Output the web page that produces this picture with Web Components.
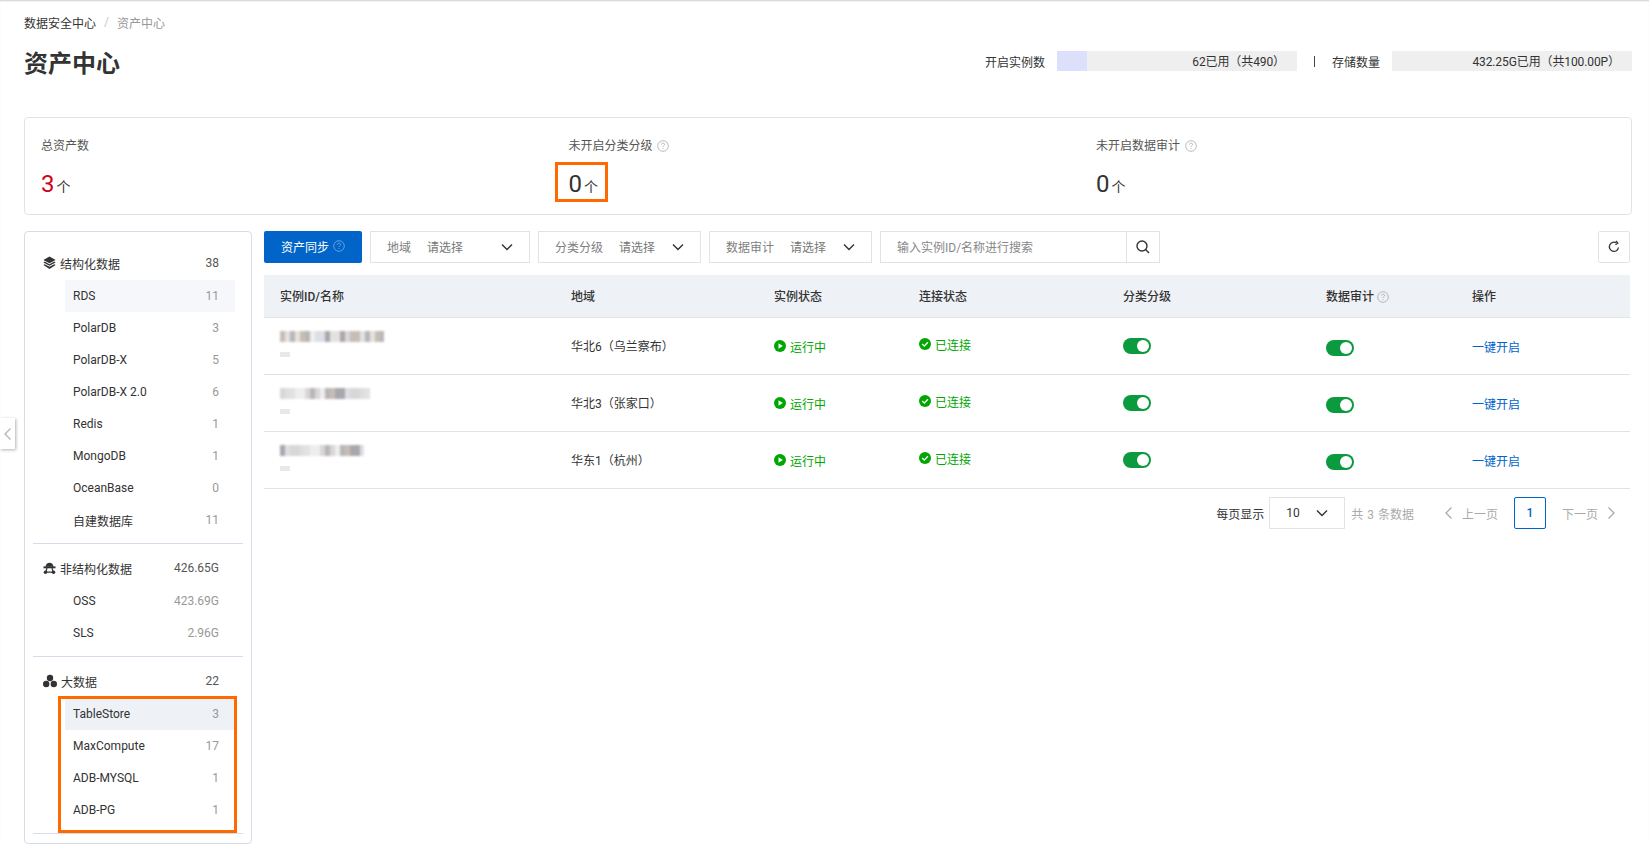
<!DOCTYPE html>
<html lang="zh-CN">
<head>
<meta charset="utf-8">
<title>资产中心</title>
<style>
  html, body {
    background: #ffffff;
    color: #333333;
    font-family: Roboto, 'Noto Sans CJK SC', sans-serif;
    font-size: 12px;
    margin: 0;
    padding: 0;
  }
</style>
</head>
<body>

<ds-app>
  <ds-breadcrumb root="数据安全中心" current="资产中心"></ds-breadcrumb>

  <ds-head title="资产中心">
    <ds-quota label="开启实例数" value="62已用（共490）" percent="12.5"></ds-quota>
    <ds-quota label="存储数量" value="432.25G已用（共100.00P）" percent="0" divided></ds-quota>
  </ds-head>

  <ds-stats>
    <ds-stat label="总资产数" value="3" danger></ds-stat>
    <ds-stat label="未开启分类分级" value="0" help marked></ds-stat>
    <ds-stat label="未开启数据审计" value="0" help></ds-stat>
  </ds-stats>

  <ds-main>
    <ds-sidebar slot="side">
      <ds-side-group label="结构化数据" count="38" icon="layers">
        <ds-side-item label="RDS" count="11" soft></ds-side-item>
        <ds-side-item label="PolarDB" count="3"></ds-side-item>
        <ds-side-item label="PolarDB-X" count="5"></ds-side-item>
        <ds-side-item label="PolarDB-X 2.0" count="6"></ds-side-item>
        <ds-side-item label="Redis" count="1"></ds-side-item>
        <ds-side-item label="MongoDB" count="1"></ds-side-item>
        <ds-side-item label="OceanBase" count="0"></ds-side-item>
        <ds-side-item label="自建数据库" count="11"></ds-side-item>
      </ds-side-group>
      <ds-side-group label="非结构化数据" count="426.65G" icon="hat">
        <ds-side-item label="OSS" count="423.69G"></ds-side-item>
        <ds-side-item label="SLS" count="2.96G"></ds-side-item>
      </ds-side-group>
      <ds-side-group label="大数据" count="22" icon="cluster" marked>
        <ds-side-item label="TableStore" count="3" active></ds-side-item>
        <ds-side-item label="MaxCompute" count="17"></ds-side-item>
        <ds-side-item label="ADB-MYSQL" count="1"></ds-side-item>
        <ds-side-item label="ADB-PG" count="1"></ds-side-item>
      </ds-side-group>
    </ds-sidebar>

    <ds-toolbar>
      <ds-button label="资产同步"></ds-button>
      <ds-select label="地域" value="请选择" width="160"></ds-select>
      <ds-select label="分类分级" value="请选择" width="163"></ds-select>
      <ds-select label="数据审计" value="请选择" width="163"></ds-select>
      <ds-search placeholder="输入实例ID/名称进行搜索"></ds-search>
      <ds-refresh></ds-refresh>
    </ds-toolbar>

    <ds-row header>
      <span>实例ID/名称</span>
      <span>地域</span>
      <span>实例状态</span>
      <span>连接状态</span>
      <span>分类分级</span>
      <span>数据审计 <ds-help></ds-help></span>
      <span>操作</span>
    </ds-row>
    <ds-row>
      <ds-masked name="104" tag="10" seed="3"></ds-masked>
      <span>华北6（乌兰察布）</span>
      <ds-status kind="running" label="运行中"></ds-status>
      <ds-status kind="connected" label="已连接"></ds-status>
      <ds-switch raised></ds-switch>
      <ds-switch></ds-switch>
      <ds-link>一键开启</ds-link>
    </ds-row>
    <ds-row>
      <ds-masked name="90" tag="10" seed="7"></ds-masked>
      <span>华北3（张家口）</span>
      <ds-status kind="running" label="运行中"></ds-status>
      <ds-status kind="connected" label="已连接"></ds-status>
      <ds-switch raised></ds-switch>
      <ds-switch></ds-switch>
      <ds-link>一键开启</ds-link>
    </ds-row>
    <ds-row>
      <ds-masked name="84" tag="10" seed="11"></ds-masked>
      <span>华东1（杭州）</span>
      <ds-status kind="running" label="运行中"></ds-status>
      <ds-status kind="connected" label="已连接"></ds-status>
      <ds-switch raised></ds-switch>
      <ds-switch></ds-switch>
      <ds-link>一键开启</ds-link>
    </ds-row>

    <ds-pager size="10" total="3" page="1"></ds-pager>
  </ds-main>

  <ds-collapse></ds-collapse>
</ds-app>

<script>
const ICONS = {
  chevron: `<svg width="14" height="14" viewBox="0 0 14 14" fill="none" stroke="currentColor" stroke-width="1.4"><path d="M2 4.5 L7 9.5 L12 4.5"/></svg>`,
  left: `<svg width="9" height="14" viewBox="0 0 9 14" fill="none" stroke="currentColor" stroke-width="1.3"><path d="M7.5 1.5 L2 7 L7.5 12.5"/></svg>`,
  right: `<svg width="9" height="14" viewBox="0 0 9 14" fill="none" stroke="currentColor" stroke-width="1.3"><path d="M1.5 1.5 L7 7 L1.5 12.5"/></svg>`,
  help: `<svg width="12" height="12" viewBox="0 0 12 12" fill="none" stroke="currentColor" stroke-width="0.8"><circle cx="6" cy="6" r="5.3"/><path d="M4.4 4.7 C4.4 3.7 5.1 3.2 6 3.2 C6.9 3.2 7.6 3.7 7.6 4.6 C7.6 5.6 6 5.7 6 7"/><path d="M6 8 L6 8.9"/></svg>`,
  layers: `<svg width="13" height="14" viewBox="0 0 13 14" fill="#333"><path d="M6.5 .6 L12.6 3.9 L6.5 7.2 L.4 3.9 Z"/><path d="M1.7 5.6 L6.5 8.2 L11.3 5.6 L12.6 6.4 L6.5 9.8 L.4 6.4 Z"/><path d="M1.7 8.2 L6.5 10.8 L11.3 8.2 L12.6 9 L6.5 13 L.4 9 Z"/></svg>`,
  hat: `<svg width="13" height="14" viewBox="0 0 13 14" fill="#333"><path d="M2.6 5.8 C2.6 .4 10.4 .4 10.4 5.8 Z"/><rect x=".5" y="5.4" width="12" height="1.9"/><path d="M4 7 L3 10.5 M9 7 L10 10.5 M3 11.2 L10 11.2" stroke="#333" stroke-width="1.2"/><circle cx="2.5" cy="11.2" r="1.8"/><circle cx="10.5" cy="11.2" r="1.8"/></svg>`,
  cluster: `<svg width="14" height="14" viewBox="0 0 14 14" fill="#333"><circle cx="7" cy="4" r="3.2"/><circle cx="3.2" cy="10" r="3.2"/><circle cx="10.8" cy="10" r="3.2"/></svg>`,
  search: `<svg width="16" height="16" viewBox="0 0 16 16" fill="none" stroke="#333" stroke-width="1.4"><circle cx="7" cy="7" r="5"/><path d="M10.6 10.6 L14 14"/></svg>`,
  refresh: `<svg width="14" height="14" viewBox="0 0 14 14" fill="none" stroke="#333" stroke-width="1.3"><path d="M11.5 7.5 A4.6 4.6 0 1 1 9.6 3"/><path d="M9 .8 L11 3.2 L8.4 4.8" stroke-width="1.1"/></svg>`,
  running: `<svg width="12" height="12" viewBox="0 0 12 12"><circle cx="6" cy="6" r="6" fill="#00a700"/><path d="M4.5 3.3 L8.8 6 L4.5 8.7 Z" fill="#fff"/></svg>`,
  connected: `<svg width="12" height="12" viewBox="0 0 12 12"><circle cx="6" cy="6" r="6" fill="#00a700"/><path d="M3.2 6.1 L5.3 8.1 L8.9 4.2" fill="none" stroke="#fff" stroke-width="1.4"/></svg>`
};

class DsApp extends HTMLElement {
  constructor() {
    super();
    this.attachShadow( {mode: 'open'} );
    this.shadowRoot.innerHTML = /* template */ `
      <style>
        :host {
          box-shadow: inset 0 2px 2px -1px #cfcfcf;
          box-sizing: border-box;
          display: block;
          height: 846px;
          overflow: hidden;
          padding: 13px 17px 0 24px;
          position: relative;
        }
      </style>
      <slot></slot>
    `;
  }
}

class DsBreadcrumb extends HTMLElement {
  constructor() {
    super();
    this.attachShadow( {mode: 'open'} );
    this.shadowRoot.innerHTML = /* template */ `
      <style>
        :host {
          align-items: center;
          box-sizing: border-box;
          color: #333333;
          display: flex;
          font-size: 12px;
          height: 20px;
          padding: 0 0 2px 0;
        }

        i {
          color: #c8c8c8;
          font-style: normal;
          margin: 0 8px 0 8px;
        }

        span:last-child {
          color: #999999;
        }
      </style>
      <span>${this.getAttribute( 'root' )}</span>
      <i>/</i>
      <span>${this.getAttribute( 'current' )}</span>
    `;
  }
}

class DsHead extends HTMLElement {
  constructor() {
    super();
    this.attachShadow( {mode: 'open'} );
    this.shadowRoot.innerHTML = /* template */ `
      <style>
        :host {
          align-items: flex-start;
          display: flex;
          height: 36px;
          justify-content: space-between;
          margin: 13px 0 35px 0;
        }

        h1 {
          color: #333333;
          font-size: 24px;
          font-weight: 700;
          line-height: 36px;
          margin: 0;
        }

        div {
          display: flex;
          margin: 5px 0 0 0;
        }
      </style>
      <h1>${this.getAttribute( 'title' )}</h1>
      <div><slot></slot></div>
    `;
  }
}

class DsQuota extends HTMLElement {
  constructor() {
    super();
    this.attachShadow( {mode: 'open'} );
    this.shadowRoot.innerHTML = /* template */ `
      <style>
        :host {
          align-items: center;
          color: #333333;
          display: flex;
          font-size: 12px;
          height: 20px;
        }

        :host( [divided] )::before {
          background: #444444;
          content: '';
          height: 11px;
          margin: 0 17px 0 17px;
          width: 1px;
        }

        b {
          background: #efefef;
          box-sizing: border-box;
          display: block;
          font-weight: 400;
          height: 20px;
          line-height: 22px;
          margin: 0 0 0 12px;
          padding: 0 12px 0 0;
          position: relative;
          text-align: right;
          width: 240px;
        }

        b::before {
          background: #dde0fb;
          content: '';
          height: 20px;
          left: 0;
          position: absolute;
          top: 0;
          width: ${this.getAttribute( 'percent' )}%;
        }

        em {
          font-style: normal;
          letter-spacing: -0.1px;
          position: relative;
        }
      </style>
      <span>${this.getAttribute( 'label' )}</span>
      <b><em>${this.getAttribute( 'value' )}</em></b>
    `;
  }
}

class DsHelp extends HTMLElement {
  constructor() {
    super();
    this.attachShadow( {mode: 'open'} );
    this.shadowRoot.innerHTML = /* template */ `
      <style>
        :host {
          color: #aaaaaa;
          display: inline-flex;
          vertical-align: -2px;
        }
      </style>
      ${ICONS.help}
    `;
  }
}

class DsStats extends HTMLElement {
  constructor() {
    super();
    this.attachShadow( {mode: 'open'} );
    this.shadowRoot.innerHTML = /* template */ `
      <style>
        :host {
          border: 1px solid #e3e3e3;
          border-radius: 4px;
          box-sizing: border-box;
          display: grid;
          grid-template-columns: repeat( 3, 527.5px );
          height: 98px;
          padding: 18px 16px 0 16px;
        }
      </style>
      <slot></slot>
    `;
  }
}

class DsStat extends HTMLElement {
  constructor() {
    super();
    const help = this.hasAttribute( 'help' ) ? '<ds-help></ds-help>' : '';

    this.attachShadow( {mode: 'open'} );
    this.shadowRoot.innerHTML = /* template */ `
      <style>
        :host {
          color: #555555;
          display: block;
          font-size: 12px;
        }

        p {
          line-height: 20px;
          margin: 0 0 12px 0;
        }

        ds-help {
          margin: 0 0 0 2px;
        }

        div {
          align-items: baseline;
          color: #333333;
          display: inline-flex;
          gap: 2px;
          height: 32px;
          line-height: 32px;
          position: relative;
        }

        strong {
          font-size: 24px;
          font-weight: 400;
        }

        span {
          font-size: 14px;
        }

        :host( [danger] ) strong {
          color: #d0021b;
        }

        :host( [marked] ) div::after {
          border: 3px solid #ff6a00;
          box-sizing: border-box;
          content: '';
          height: 40px;
          left: -14px;
          position: absolute;
          top: -6px;
          width: 53px;
        }
      </style>
      <p>${this.getAttribute( 'label' )} ${help}</p>
      <div><strong>${this.getAttribute( 'value' )}</strong><span>个</span></div>
    `;
  }
}

class DsMain extends HTMLElement {
  constructor() {
    super();
    this.attachShadow( {mode: 'open'} );
    this.shadowRoot.innerHTML = /* template */ `
      <style>
        :host {
          align-items: start;
          display: grid;
          gap: 12px;
          grid-template-columns: 228px 1fr;
          margin: 16px 0 0 0;
        }

        div {
          min-width: 0;
          padding: 0 2px 0 0;
        }
      </style>
      <slot name="side"></slot>
      <div><slot></slot></div>
    `;
  }
}

class DsSidebar extends HTMLElement {
  constructor() {
    super();
    this.attachShadow( {mode: 'open'} );
    this.shadowRoot.innerHTML = /* template */ `
      <style>
        :host {
          border: 1px solid #d5dde9;
          border-radius: 4px;
          box-sizing: border-box;
          display: block;
          padding: 16px 8px 9px 8px;
        }
      </style>
      <slot></slot>
    `;
  }
}

class DsSideGroup extends HTMLElement {
  constructor() {
    super();
    this.attachShadow( {mode: 'open'} );
    this.shadowRoot.innerHTML = /* template */ `
      <style>
        :host {
          border-bottom: 1px solid #d5dde9;
          display: block;
          padding: 0 0 7px 0;
        }

        :host( :not( :first-child ) ) {
          padding-top: 9px;
        }

        header {
          align-items: center;
          box-sizing: border-box;
          color: #333333;
          display: flex;
          font-size: 12px;
          height: 32px;
          padding: 0 24px 2px 10px;
        }

        svg {
          flex: 0 0 auto;
        }

        span {
          flex: 1;
          margin: 0 0 0 4px;
        }

        em {
          color: #555555;
          font-style: normal;
        }

        div {
          margin: 0 8px 0 32px;
          position: relative;
        }

        :host( [marked] ) div::after {
          border: 3px solid #ff6a00;
          box-sizing: border-box;
          content: '';
          height: 137px;
          left: -7px;
          pointer-events: none;
          position: absolute;
          top: -2px;
          width: 179px;
        }
      </style>
      <header>
        ${ICONS[this.getAttribute( 'icon' )]}
        <span>${this.getAttribute( 'label' )}</span>
        <em>${this.getAttribute( 'count' )}</em>
      </header>
      <div><slot></slot></div>
    `;
  }
}

class DsSideItem extends HTMLElement {
  constructor() {
    super();
    this.attachShadow( {mode: 'open'} );
    this.shadowRoot.innerHTML = /* template */ `
      <style>
        :host {
          align-items: center;
          box-sizing: border-box;
          color: #333333;
          display: flex;
          font-size: 12px;
          height: 32px;
          justify-content: space-between;
          padding: 0 16px 0 8px;
        }

        :host( [soft] ) {
          background: #f6f7fa;
        }

        :host( [active] ) {
          background: #eef1f6;
        }

        em {
          color: #999999;
          font-style: normal;
        }
      </style>
      <span>${this.getAttribute( 'label' )}</span>
      <em>${this.getAttribute( 'count' )}</em>
    `;
  }
}

class DsToolbar extends HTMLElement {
  constructor() {
    super();
    this.attachShadow( {mode: 'open'} );
    this.shadowRoot.innerHTML = /* template */ `
      <style>
        :host {
          align-items: stretch;
          display: flex;
          gap: 8px;
          height: 32px;
          margin: 0 0 12px 0;
        }
      </style>
      <slot></slot>
    `;
  }
}

class DsButton extends HTMLElement {
  constructor() {
    super();
    this.attachShadow( {mode: 'open'} );
    this.shadowRoot.innerHTML = /* template */ `
      <style>
        :host {
          align-items: center;
          background: #0064c8;
          border-radius: 2px;
          box-sizing: border-box;
          color: #ffffff;
          display: flex;
          font-size: 12px;
          gap: 4px;
          padding: 0 0 2px 17px;
          width: 98px;
        }

        ds-help {
          color: #7fb1e3;
        }
      </style>
      <span>${this.getAttribute( 'label' )}</span>
      <ds-help></ds-help>
    `;
  }
}

class DsSelect extends HTMLElement {
  constructor() {
    super();
    this.attachShadow( {mode: 'open'} );
    this.shadowRoot.innerHTML = /* template */ `
      <style>
        :host {
          align-items: center;
          border: 1px solid #e3e3e3;
          box-sizing: border-box;
          color: #808080;
          display: flex;
          font-size: 12px;
          gap: 16px;
          padding: 0 15px 2px 16px;
          white-space: nowrap;
          width: ${this.getAttribute( 'width' )}px;
        }

        .value {
          color: #777777;
          flex: 1;
        }

        svg {
          color: #333333;
          margin: 2px 0 0 0;
        }
      </style>
      <span>${this.getAttribute( 'label' )}</span>
      <span class="value">${this.getAttribute( 'value' )}</span>
      ${ICONS.chevron}
    `;
  }
}

class DsSearch extends HTMLElement {
  constructor() {
    super();
    this.attachShadow( {mode: 'open'} );
    this.shadowRoot.innerHTML = /* template */ `
      <style>
        :host {
          border: 1px solid #e3e3e3;
          box-sizing: border-box;
          color: #888888;
          display: flex;
          font-size: 12px;
          width: 280px;
        }

        span {
          align-self: center;
          flex: 1;
          padding: 0 0 2px 16px;
        }

        div {
          align-items: center;
          border-left: 1px solid #e3e3e3;
          display: flex;
          justify-content: center;
          width: 32px;
        }
      </style>
      <span>${this.getAttribute( 'placeholder' )}</span>
      <div>${ICONS.search}</div>
    `;
  }
}

class DsRefresh extends HTMLElement {
  constructor() {
    super();
    this.attachShadow( {mode: 'open'} );
    this.shadowRoot.innerHTML = /* template */ `
      <style>
        :host {
          align-items: center;
          border: 1px solid #e3e3e3;
          border-radius: 2px;
          box-sizing: border-box;
          display: flex;
          justify-content: center;
          margin: 0 0 0 auto;
          width: 32px;
        }
      </style>
      ${ICONS.refresh}
    `;
  }
}

class DsRow extends HTMLElement {
  constructor() {
    super();
    this.attachShadow( {mode: 'open'} );
    this.shadowRoot.innerHTML = /* template */ `
      <style>
        :host {
          align-items: center;
          border-bottom: 1px solid #e3e3e3;
          box-sizing: border-box;
          color: #333333;
          display: grid;
          font-size: 12px;
          grid-template-columns: 291px 203px 145px 204px 203px 146px 1fr;
          height: 57px;
          padding: 0 0 2px 16px;
        }

        :host( [header] ) {
          background: #eef1f6;
          font-weight: 500;
          height: 43px;
        }
      </style>
      <slot></slot>
    `;
  }
}

// Stands in for the instance names that are blurred in the picture
class DsMasked extends HTMLElement {
  constructor() {
    super();
    const colors = ['#d9d6d6', '#b9b6b8', '#e4e2e0', '#c7bdb6', '#a9a7ad', '#dcdfe4', '#efeeee'];
    let seed = parseInt( this.getAttribute( 'seed' ) );
    const width = parseInt( this.getAttribute( 'name' ) );
    let stops = [];

    for( let x = 0; x < width; x = x + 5 ) {
      seed = ( seed * 7 + 3 ) % 31;
      const color = colors[seed % colors.length];
      stops.push( `${color} ${x}px ${x + 5}px` );
    }

    this.attachShadow( {mode: 'open'} );
    this.shadowRoot.innerHTML = /* template */ `
      <style>
        :host {
          align-self: start;
          display: block;
          padding: 13px 0 0 0;
        }

        div {
          background: linear-gradient( 90deg, ${stops.join( ', ' )} );
          filter: blur( 1.2px );
          height: 11px;
          width: ${width}px;
        }

        p {
          background: #e9e9e9;
          filter: blur( 0.5px );
          height: 5px;
          margin: 10px 0 0 0;
          width: ${this.getAttribute( 'tag' )}px;
        }
      </style>
      <div></div>
      <p></p>
    `;
  }
}

class DsStatus extends HTMLElement {
  constructor() {
    super();
    const kind = this.getAttribute( 'kind' );

    this.attachShadow( {mode: 'open'} );
    this.shadowRoot.innerHTML = /* template */ `
      <style>
        :host {
          align-items: center;
          color: #00a700;
          display: flex;
          font-size: 12px;
          gap: 4px;
        }

        :host( [kind=running] ) {
          margin: 2px 0 0 0;
        }

        :host( [kind=connected] ) {
          margin: 0 0 2px 0;
        }
      </style>
      ${ICONS[kind]}
      <span>${this.getAttribute( 'label' )}</span>
    `;
  }
}

class DsSwitch extends HTMLElement {
  constructor() {
    super();
    this.attachShadow( {mode: 'open'} );
    this.shadowRoot.innerHTML = /* template */ `
      <style>
        :host {
          background: #0b9a3e;
          border-radius: 8px;
          display: block;
          height: 16px;
          margin: 6px 0 0 0;
          position: relative;
          width: 28px;
        }

        :host( [raised] ) {
          margin: 2px 0 0 0;
        }

        i {
          background: #ffffff;
          border-radius: 50%;
          height: 12px;
          position: absolute;
          right: 2px;
          top: 2px;
          width: 12px;
        }
      </style>
      <i></i>
    `;
  }
}

class DsLink extends HTMLElement {
  constructor() {
    super();
    this.attachShadow( {mode: 'open'} );
    this.shadowRoot.innerHTML = /* template */ `
      <style>
        :host {
          color: #0064c8;
          display: block;
          font-size: 12px;
          margin: 2px 0 0 0;
        }
      </style>
      <slot></slot>
    `;
  }
}

class DsPager extends HTMLElement {
  constructor() {
    super();
    this.attachShadow( {mode: 'open'} );
    this.shadowRoot.innerHTML = /* template */ `
      <style>
        :host {
          align-items: center;
          color: #333333;
          display: flex;
          font-size: 12px;
          height: 32px;
          justify-content: flex-end;
          margin: 8px 0 0 0;
          padding: 0 14px 0 0;
        }

        .size {
          align-items: center;
          border: 1px solid #e3e3e3;
          box-sizing: border-box;
          display: flex;
          height: 32px;
          justify-content: space-between;
          margin: 0 6px 0 5px;
          padding: 0 15px 0 16px;
          width: 76px;
        }

        .total {
          color: #aaaaaa;
          margin: 0 30px 0 0;
          word-spacing: 1px;
        }

        .nav {
          align-items: center;
          color: #aaaaaa;
          display: flex;
          gap: 9px;
        }

        .page {
          align-items: center;
          border: 1px solid #0064c8;
          border-radius: 2px;
          box-sizing: border-box;
          color: #0064c8;
          display: flex;
          font-weight: 500;
          height: 32px;
          justify-content: center;
          margin: 0 16px 0 16px;
          width: 32px;
        }
      </style>
      <span>每页显示</span>
      <div class="size"><span>${this.getAttribute( 'size' )}</span>${ICONS.chevron}</div>
      <span class="total">共 ${this.getAttribute( 'total' )} 条数据</span>
      <div class="nav">${ICONS.left}<span>上一页</span></div>
      <div class="page">${this.getAttribute( 'page' )}</div>
      <div class="nav"><span>下一页</span>${ICONS.right}</div>
    `;
  }
}

// Handle that lies over the page edge
class DsCollapse extends HTMLElement {
  constructor() {
    super();
    this.attachShadow( {mode: 'open'} );
    this.shadowRoot.innerHTML = /* template */ `
      <style>
        :host {
          align-items: center;
          background: #ffffff;
          box-shadow: 1px 1px 3px rgba( 0, 0, 0, 0.3 );
          color: #b5b5b5;
          display: flex;
          height: 31px;
          justify-content: center;
          left: 0;
          position: absolute;
          top: 418px;
          width: 15px;
        }
      </style>
      ${ICONS.left}
    `;
  }
}

window.customElements.define( 'ds-app', DsApp );
window.customElements.define( 'ds-breadcrumb', DsBreadcrumb );
window.customElements.define( 'ds-head', DsHead );
window.customElements.define( 'ds-quota', DsQuota );
window.customElements.define( 'ds-help', DsHelp );
window.customElements.define( 'ds-stats', DsStats );
window.customElements.define( 'ds-stat', DsStat );
window.customElements.define( 'ds-main', DsMain );
window.customElements.define( 'ds-sidebar', DsSidebar );
window.customElements.define( 'ds-side-group', DsSideGroup );
window.customElements.define( 'ds-side-item', DsSideItem );
window.customElements.define( 'ds-toolbar', DsToolbar );
window.customElements.define( 'ds-button', DsButton );
window.customElements.define( 'ds-select', DsSelect );
window.customElements.define( 'ds-search', DsSearch );
window.customElements.define( 'ds-refresh', DsRefresh );
window.customElements.define( 'ds-row', DsRow );
window.customElements.define( 'ds-masked', DsMasked );
window.customElements.define( 'ds-status', DsStatus );
window.customElements.define( 'ds-switch', DsSwitch );
window.customElements.define( 'ds-link', DsLink );
window.customElements.define( 'ds-pager', DsPager );
window.customElements.define( 'ds-collapse', DsCollapse );
</script>
</body>
</html>
